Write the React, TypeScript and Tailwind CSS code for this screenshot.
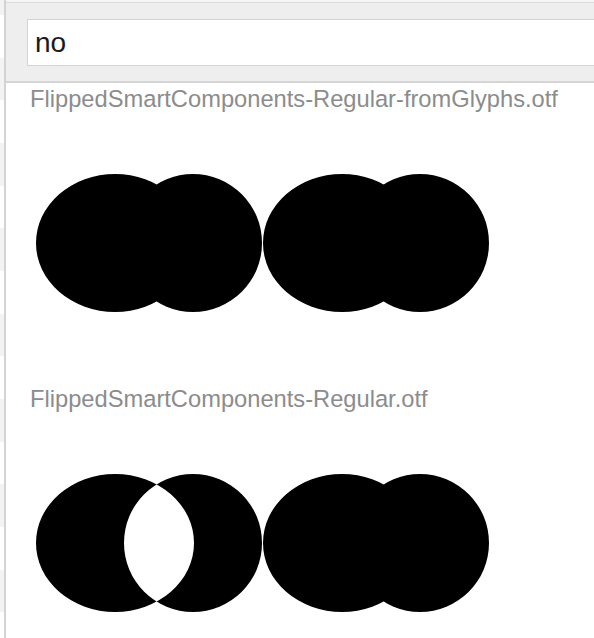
import React from 'react';

const stripes = Array.from({ length: 15 }, (_, i) => i);

function Glyphs({ flipped }: { flipped: boolean }) {
  // one glyph = an ellipse lobe plus a circle lobe; the second glyph is always merged
  const lobes = (x: number) =>
    `M${x - 79},69 a79,69 0 1,0 158,0 a79,69 0 1,0 -158,0 Z ` +
    `M${x + 9},69 a69,69 0 1,0 138,0 a69,69 0 1,0 -138,0 Z`;
  return (
    <svg width="470" height="138" viewBox="0 0 470 138" className="block">
      <path d={lobes(85)} fill="#000" fillRule={flipped ? 'evenodd' : 'nonzero'} />
      <path d={lobes(312)} fill="#000" fillRule="nonzero" />
    </svg>
  );
}

function Sample({ name, flipped }: { name: string; flipped: boolean }) {
  return (
    <div className="h-[300px] shrink-0 pl-[24px] pt-[3px]">
      <div className="text-[23.7px] leading-none h-[24px] text-[#8c8c8c] whitespace-nowrap">{name}</div>
      <div className="mt-[62px]">
        <Glyphs flipped={flipped} />
      </div>
    </div>
  );
}

export default function App() {
  return (
    <div
      className="flex w-[594px] h-[638px] overflow-hidden bg-white"
      style={{ fontFamily: '"Liberation Sans", Arial, sans-serif' }}
    >
      {/* side list peeking in on the left */}
      <div className="w-[4px] shrink-0 flex flex-col">
        <div className="h-[15px] shrink-0 bg-[#f3f3f3]" />
        {stripes.map((i) => (
          <div key={i} className={`h-[42.67px] shrink-0 ${i % 2 === 0 ? 'bg-white' : 'bg-[#f3f3f3]'}`} />
        ))}
      </div>
      <div className="w-[2px] shrink-0 bg-[#d3d3d3]" />

      <div className="flex-1 min-w-0 flex flex-col">
        <div className="h-[3px] shrink-0 bg-[#f6f6f6] border-b border-[#d9d9d9]" />
        <div className="h-[80px] shrink-0 bg-[#eeeeef] border-b-2 border-[#d6d6d6] pl-[21px] pt-[16px]">
          <div className="h-[47px] -mr-[10px] bg-white border border-[#d4d4d4] flex items-center pl-[7px] text-[28px] text-[#1a1a1a]">
            no
          </div>
        </div>
        <div className="pt-[2px] shrink-0">
          <Sample name="FlippedSmartComponents-Regular-fromGlyphs.otf" flipped={false} />
          <Sample name="FlippedSmartComponents-Regular.otf" flipped={true} />
        </div>
      </div>
    </div>
  );
}
